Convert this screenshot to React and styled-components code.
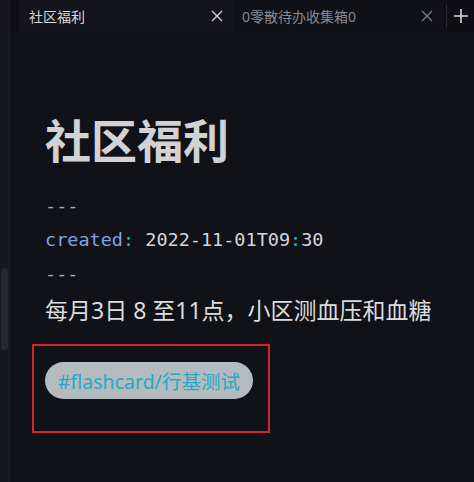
import React from 'react'
import styled, { createGlobalStyle } from 'styled-components'

const Global = createGlobalStyle`
  html, body {
    margin: 0;
    padding: 0;
    background: #111118;
    overflow: hidden;
  }
`;

const Page = styled.div`
  width: 474px;
  height: 482px;
  display: flex;
  background: #111118;
  font-family: "Noto Sans", "Noto Sans CJK SC", sans-serif;
`;

const Gutter = styled.div`
  width: 10px;
  flex: none;
  background: #17171f;
  border-right: 1px solid #1d1d26;
  display: flex;
  flex-direction: column;
  padding-top: 268px;
  box-sizing: border-box;
`;

const Thumb = styled.div`
  width: 7px;
  height: 82px;
  margin-left: 1px;
  border-radius: 3px;
  background: #26262f;
`;

const Main = styled.div`
  flex: 1;
  display: flex;
  flex-direction: column;
  min-width: 0;
`;

const TabBar = styled.div`
  height: 32px;
  display: flex;
  align-items: stretch;
  background: #0e0e14;
  padding-left: 9px;
`;

const Tab = styled.div`
  width: ${p => p.$w}px;
  display: flex;
  align-items: center;
  justify-content: space-between;
  padding: 0 10px 0 ${p => p.$active ? 10 : 8}px;
  box-sizing: border-box;
  background: ${p => p.$active ? '#14141c' : '#101017'};
  color: ${p => p.$active ? '#d8d8d8' : '#8a8a92'};
  font-size: 14px;
`;

const Close = styled.span`
  display: flex;
  color: ${p => p.$dim ? '#7a7a82' : '#d0d0d0'};
`;

const Divider = styled.div`
  width: 1px;
  height: 22px;
  align-self: center;
  background: #2c2c34;
  margin-left: 2px;
`;

const Plus = styled.div`
  flex: 1;
  display: flex;
  align-items: center;
  justify-content: center;
  color: #d8d8d8;
`;

const Content = styled.div`
  flex: 1;
  padding: 75px 0 0 35px;
  display: flex;
  flex-direction: column;
`;

const Title = styled.h1`
  margin: 0;
  font-family: "Noto Sans CJK SC", sans-serif;
  font-weight: 700;
  font-size: 46px;
  line-height: 62px;
  color: #d2d2d4;
`;

const Mono = styled.div`
  font-family: "DejaVu Sans Mono", "Liberation Mono", monospace;
  font-size: 18.5px;
  line-height: 34px;
  color: ${p => p.$dim ? '#a8a8ae' : '#d6d6d8'};
`;

const Key = styled.span`
  color: #7ea3e6;
`;

const Colon = styled.span`
  color: #2fb1ba;
`;

const Body = styled.p`
  margin: 0;
  font-family: "Noto Sans", "Noto Sans CJK SC", sans-serif;
  font-size: 23px;
  line-height: 38px;
  color: #dcdcde;
`;

const Marked = styled.div`
  margin: 15px 0 0 -13px;
  width: 238px;
  height: 89px;
  box-sizing: border-box;
  border: 2px solid #d3232b;
  padding: 16px 0 0 11px;
`;

const Pill = styled.span`
  display: inline-flex;
  align-items: center;
  height: 37px;
  padding: 0 13px;
  border-radius: 19px;
  background: #b3bbbf;
  color: #27a9c6;
  font-family: "Noto Sans", "Noto Sans CJK SC", sans-serif;
  font-size: 19.5px;
`;

const X = ({ size = 14 }) => (
  <svg width={size} height={size} viewBox="0 0 14 14" fill="none" stroke="currentColor" strokeWidth="1.4">
    <path d="M2 2L12 12M12 2L2 12" />
  </svg>
);

export default function App() {
  return (
    <Page>
      <Global />
      <Gutter>
        <Thumb />
      </Gutter>
      <Main>
        <TabBar>
          <Tab $active $w={215}>
            社区福利
            <Close><X /></Close>
          </Tab>
          <Tab $w={210}>
            0零散待办收集箱0
            <Close $dim><X /></Close>
          </Tab>
          <Divider />
          <Plus>
            <svg width="16" height="16" viewBox="0 0 16 16" fill="none" stroke="currentColor" strokeWidth="1.6">
              <path d="M8 1V15M1 8H15" />
            </svg>
          </Plus>
        </TabBar>
        <Content>
          <Title>社区福利</Title>
          <Mono $dim style={{ marginTop: 20 }}>---</Mono>
          <Mono><Key>created</Key><Colon>:</Colon> 2022-11-01T09<Colon>:</Colon>30</Mono>
          <Mono $dim>---</Mono>
          <Body>每月3日 8 至11点，小区测血压和血糖</Body>
          <Marked>
            <Pill>#flashcard/行基测试</Pill>
          </Marked>
        </Content>
      </Main>
    </Page>
  )
}
